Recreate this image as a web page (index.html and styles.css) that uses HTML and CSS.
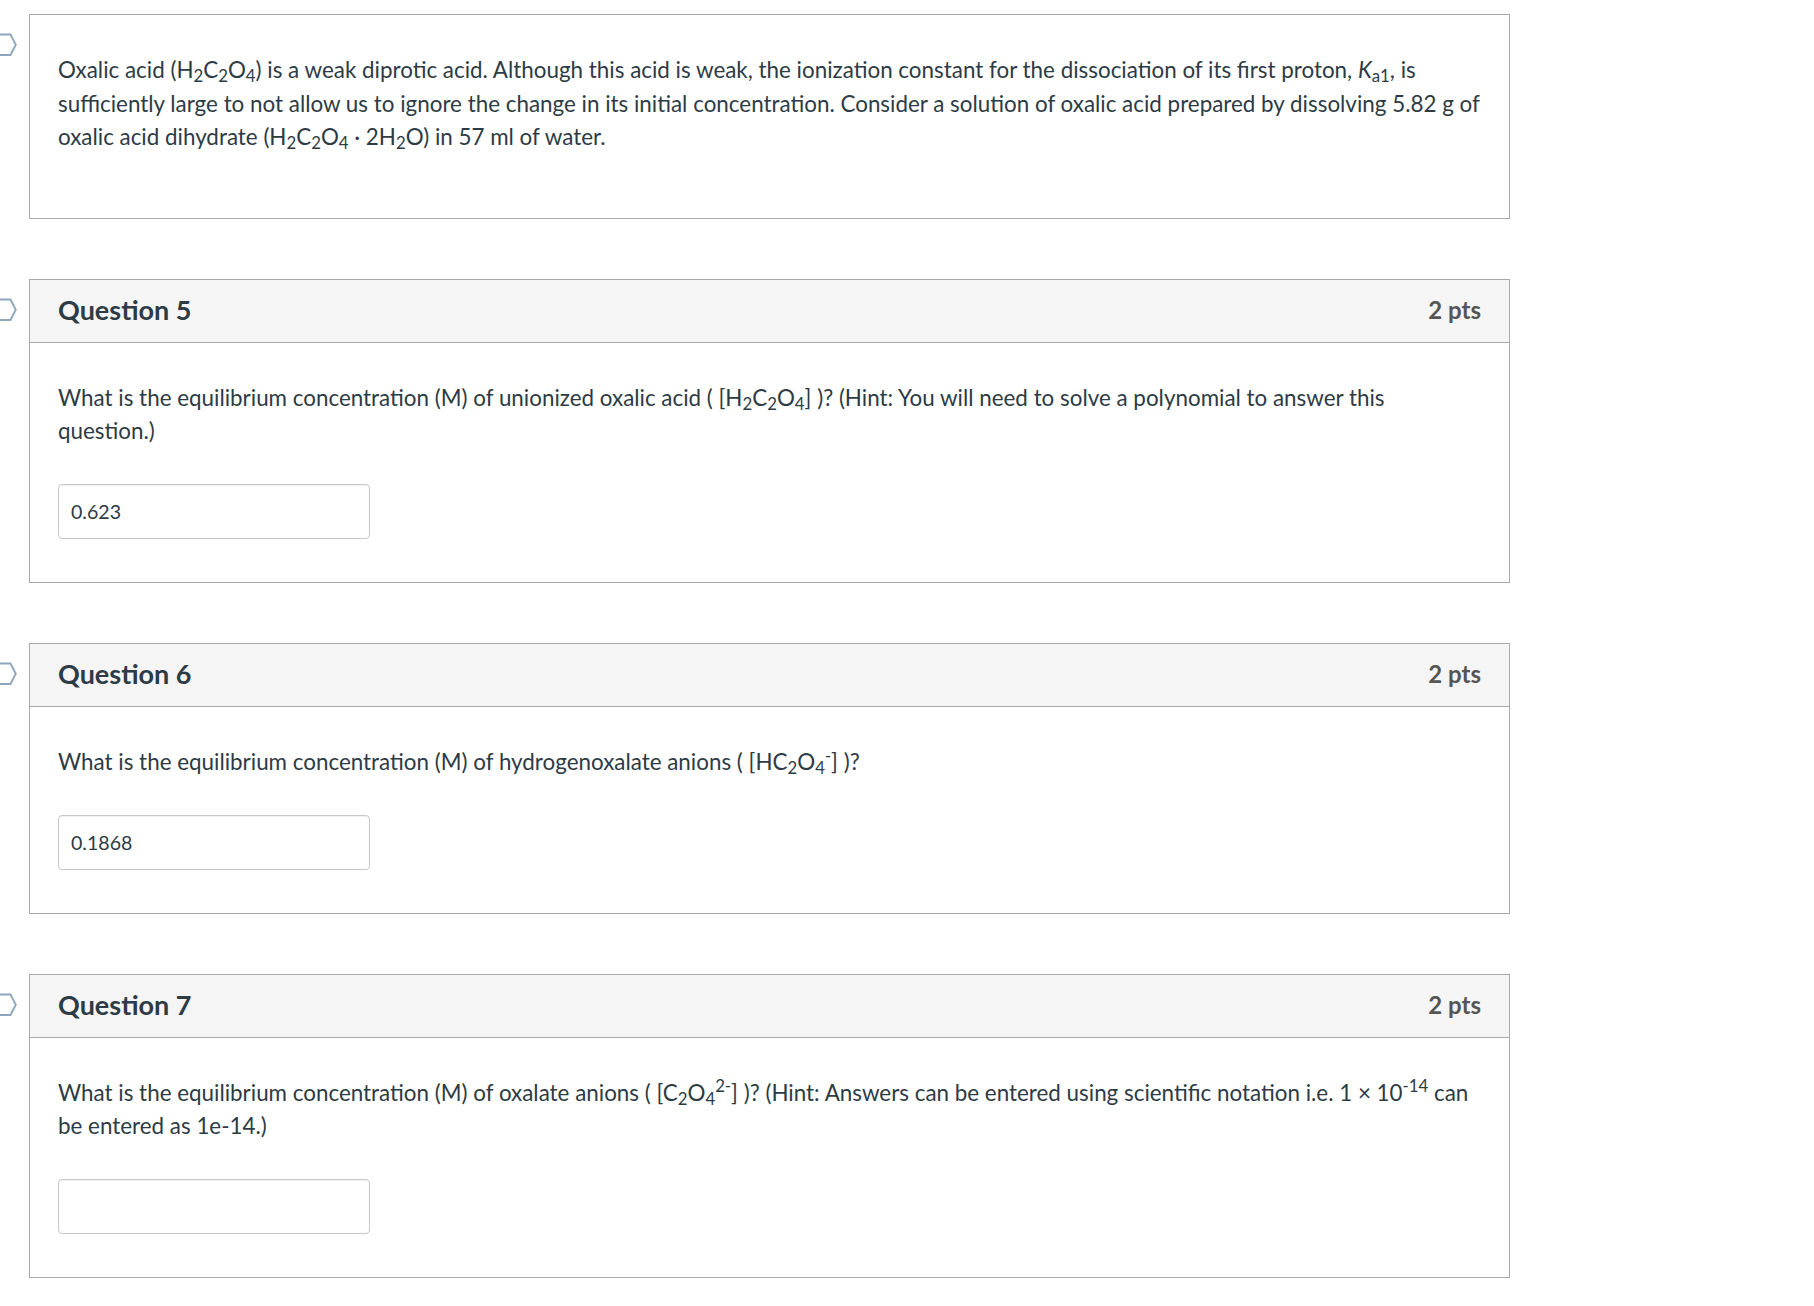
FILE: index.html
```html
<!DOCTYPE html>
<html lang="en">
<head>
<meta charset="utf-8">
<title>Quiz</title>
<link rel="stylesheet" href="styles.css">
</head>
<body>
<main class="quiz">
  <section class="card intro">
    <svg class="flag" viewBox="0 0 18 24" width="18" height="24" aria-hidden="true"><path d="M-6 1.5 H10.5 L15.8 11.8 L10.5 22 H-6 Z"/></svg>
    <div class="text">
      <p>Oxalic acid (H<sub>2</sub>C<sub>2</sub>O<sub>4</sub>) is a weak diprotic acid. Although this acid is weak, the ionization constant for the dissociation of its first proton, <i>K</i><sub>a1</sub>, is sufficiently large to not allow us to ignore the change in its initial concentration. Consider a solution of oxalic acid prepared by dissolving 5.82 g of oxalic acid dihydrate (H<sub>2</sub>C<sub>2</sub>O<sub>4</sub> · 2H<sub>2</sub>O) in 57 ml of water.</p>
    </div>
  </section>

  <section class="card question">
    <svg class="flag" viewBox="0 0 18 24" width="18" height="24" aria-hidden="true"><path d="M-6 1.5 H10.5 L15.8 11.8 L10.5 22 H-6 Z"/></svg>
    <header class="q-header">
      <h2 class="q-title">Question 5</h2>
      <span class="q-pts">2 pts</span>
    </header>
    <div class="q-body">
      <p>What is the equilibrium concentration (M) of unionized oxalic acid ( [H<sub>2</sub>C<sub>2</sub>O<sub>4</sub>] )? (Hint: You will need to solve a polynomial to answer this question.)</p>
      <input class="answer" type="text" value="0.623">
    </div>
  </section>

  <section class="card question">
    <svg class="flag" viewBox="0 0 18 24" width="18" height="24" aria-hidden="true"><path d="M-6 1.5 H10.5 L15.8 11.8 L10.5 22 H-6 Z"/></svg>
    <header class="q-header">
      <h2 class="q-title">Question 6</h2>
      <span class="q-pts">2 pts</span>
    </header>
    <div class="q-body">
      <p>What is the equilibrium concentration (M) of hydrogenoxalate anions ( [HC<sub>2</sub>O<sub>4</sub><sup>-</sup>] )?</p>
      <input class="answer" type="text" value="0.1868">
    </div>
  </section>

  <section class="card question">
    <svg class="flag" viewBox="0 0 18 24" width="18" height="24" aria-hidden="true"><path d="M-6 1.5 H10.5 L15.8 11.8 L10.5 22 H-6 Z"/></svg>
    <header class="q-header">
      <h2 class="q-title">Question 7</h2>
      <span class="q-pts">2 pts</span>
    </header>
    <div class="q-body">
      <p>What is the equilibrium concentration (M) of oxalate anions ( [C<sub>2</sub>O<sub>4</sub><sup>2-</sup>] )? (Hint: Answers can be entered using scientific notation i.e. 1 × 10<sup>-14</sup> can be entered as 1e-14.)</p>
      <input class="answer" type="text" value="">
    </div>
  </section>
</main>
</body>
</html>
```

FILE: styles.css
```css
html, body {
  margin: 0;
  padding: 0;
  background: #ffffff;
}

body {
  font-family: Lato, "Noto Sans", "Liberation Sans", sans-serif;
  color: #2d3b45;
  font-size: 22.4px;
  line-height: 33.6px;
}

.quiz {
  display: flex;
  flex-direction: column;
  gap: 60px;
  padding: 14px 0 40px 29px;
  width: 1481px;
}

.card {
  position: relative;
  border: 1px solid #aaaaaa;
  background: #ffffff;
}

.flag {
  position: absolute;
  left: -30px;
  top: 18px;
  fill: none;
  stroke: #8ea7bf;
  stroke-width: 1.9;
  stroke-linejoin: miter;
  overflow: visible;
}

.intro .text {
  padding: 38px 28px 64px;
}

p {
  margin: 0;
}

sub, sup {
  font-size: 75%;
  line-height: 0;
  position: relative;
  vertical-align: baseline;
}

sub {
  bottom: -0.25em;
}

sup {
  top: -0.5em;
}

.q-header {
  display: flex;
  align-items: center;
  justify-content: space-between;
  height: 63px;
  padding: 0 28px 2px 28px;
  box-sizing: border-box;
  background: #f5f5f5;
  border-bottom: 1px solid #aaaaaa;
}

.q-title {
  margin: 0;
  font-size: 27px;
  font-weight: 700;
  color: #2d3b45;
}

.q-pts {
  font-size: 24px;
  font-weight: 700;
  color: #555555;
}

.q-body {
  padding: 38px 28px 43px;
}

.answer {
  display: block;
  box-sizing: border-box;
  margin-top: 36px;
  width: 312px;
  height: 55px;
  padding: 0 12px;
  border: 1px solid #c8c8c8;
  border-radius: 4px;
  box-shadow: inset 0 1px 1px rgba(0, 0, 0, 0.06);
  font-family: Lato, "Noto Sans", "Liberation Sans", sans-serif;
  font-size: 19.6px;
  color: #2d3b45;
  background: #ffffff;
}
```
